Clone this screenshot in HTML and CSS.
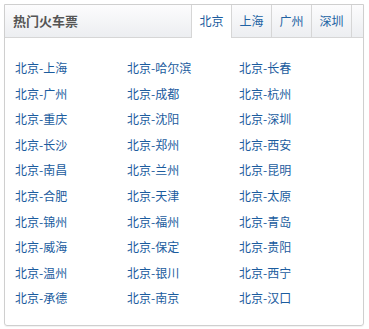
FILE: index.html
```html
<!DOCTYPE html>
<html lang="zh-CN">
<head>
    <meta charset="UTF-8">
    <title>热门火车票</title>
    <link rel="stylesheet" href="styles.css">
</head>
<body>
    <div class="trainBox">
        <div class="trainHead">
            <h3 class="trainTitle">热门火车票</h3>
            <ul class="tabs">
                <li class="tab active">北京</li>
                <li class="tab">上海</li>
                <li class="tab">广州</li>
                <li class="tab">深圳</li>
            </ul>
        </div>
        <ul class="routes">
            <li><a href="#">北京-上海</a></li>
            <li><a href="#">北京-哈尔滨</a></li>
            <li><a href="#">北京-长春</a></li>
            <li><a href="#">北京-广州</a></li>
            <li><a href="#">北京-成都</a></li>
            <li><a href="#">北京-杭州</a></li>
            <li><a href="#">北京-重庆</a></li>
            <li><a href="#">北京-沈阳</a></li>
            <li><a href="#">北京-深圳</a></li>
            <li><a href="#">北京-长沙</a></li>
            <li><a href="#">北京-郑州</a></li>
            <li><a href="#">北京-西安</a></li>
            <li><a href="#">北京-南昌</a></li>
            <li><a href="#">北京-兰州</a></li>
            <li><a href="#">北京-昆明</a></li>
            <li><a href="#">北京-合肥</a></li>
            <li><a href="#">北京-天津</a></li>
            <li><a href="#">北京-太原</a></li>
            <li><a href="#">北京-锦州</a></li>
            <li><a href="#">北京-福州</a></li>
            <li><a href="#">北京-青岛</a></li>
            <li><a href="#">北京-威海</a></li>
            <li><a href="#">北京-保定</a></li>
            <li><a href="#">北京-贵阳</a></li>
            <li><a href="#">北京-温州</a></li>
            <li><a href="#">北京-银川</a></li>
            <li><a href="#">北京-西宁</a></li>
            <li><a href="#">北京-承德</a></li>
            <li><a href="#">北京-南京</a></li>
            <li><a href="#">北京-汉口</a></li>
        </ul>
    </div>
</body>
</html>
```

FILE: styles.css
```css
html, body, div, ul, li, h3, a {
    margin: 0;
    padding: 0;
    border: 0;
}

ul {
    list-style: none;
}

body {
    padding: 4px;
    font-family: "Noto Sans CJK SC", "Liberation Sans", sans-serif;
    font-size: 12px;
    background: #fff;
}

.trainBox {
    box-sizing: border-box;
    width: 360px;
    height: 322px;
    border: 1px solid #cfcfcf;
    border-radius: 0 0 3px 3px;
    box-shadow: 0 1px 1px rgba(0, 0, 0, 0.06);
}

.trainHead {
    height: 32px;
    display: flex;
    justify-content: space-between;
    align-items: stretch;
    background: linear-gradient(#fcfcfd, #eceef1);
    border-bottom: 1px solid #d6d6d6;
}

.trainTitle {
    padding-left: 8px;
    line-height: 31px;
    font-size: 13px;
    font-weight: bold;
    color: #555;
}

.tabs {
    display: flex;
    margin-right: 11px;
    border-right: 1px solid #d6d6d6;
}

.tab {
    width: 39px;
    text-align: center;
    line-height: 31px;
    color: #2162a3;
    border-left: 1px solid #d6d6d6;
}

.tab.active {
    background: #fff;
    height: 33px;
    color: #1b5c9e;
}

.routes {
    display: grid;
    grid-template-columns: 112px 112px 112px;
    padding: 17px 0 0 10px;
}

.routes li {
    line-height: 25.6px;
}

.routes a {
    color: #1b5c9e;
    text-decoration: none;
}
```
